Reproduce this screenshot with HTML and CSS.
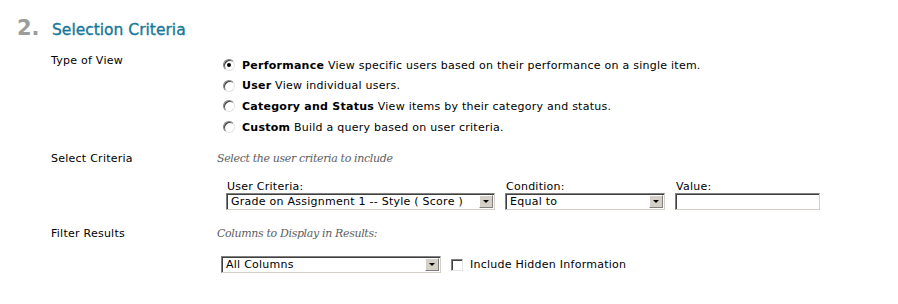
FILE: index.html
```html
<!DOCTYPE html>
<html>
<head>
<meta charset="utf-8">
<link rel="stylesheet" href="styles.css">
</head>
<body>
<div class="page">
  <h2 class="step"><span class="num">2.</span><span class="title">Selection Criteria</span></h2>

  <div class="row row-view">
    <div class="label">Type of View</div>
    <div class="field">
      <ul class="options">
        <li><span class="radio checked"></span><b>Performance</b> View specific users based on their performance on a single item.</li>
        <li><span class="radio"></span><b>User</b> View individual users.</li>
        <li><span class="radio"></span><b>Category and Status</b> View items by their category and status.</li>
        <li><span class="radio"></span><b>Custom</b> Build a query based on user criteria.</li>
      </ul>
    </div>
  </div>

  <div class="row row-criteria">
    <div class="label">Select Criteria</div>
    <div class="field">
      <div class="hint">Select the user criteria to include</div>
      <div class="criteria">
        <div class="col col-user">
          <div class="sublabel">User Criteria:</div>
          <div class="select w-user"><span class="val">Grade on Assignment 1 -- Style ( Score )</span><span class="btn"><span class="tri"></span></span></div>
        </div>
        <div class="col col-cond">
          <div class="sublabel">Condition:</div>
          <div class="select w-cond"><span class="val">Equal to</span><span class="btn"><span class="tri"></span></span></div>
        </div>
        <div class="col col-value">
          <div class="sublabel">Value:</div>
          <div class="input w-value"></div>
        </div>
      </div>
    </div>
  </div>

  <div class="row row-filter">
    <div class="label">Filter Results</div>
    <div class="field">
      <div class="hint">Columns to Display in Results:</div>
      <div class="filter">
        <div class="select w-cols"><span class="val">All Columns</span><span class="btn"><span class="tri"></span></span></div>
        <span class="check"></span><span class="check-label">Include Hidden Information</span>
      </div>
    </div>
  </div>
</div>
</body>
</html>
```
FILE: styles.css
```css
html, body {
  margin: 0;
  padding: 0;
  background: #fff;
}
body {
  font-family: "DejaVu Sans", Verdana, sans-serif;
  font-size: 11px;
  letter-spacing: 0.25px;
  color: #000;
}
.page {
  padding: 16px 0 0 0;
}
.step {
  margin: 0;
  display: flex;
  align-items: baseline;
  padding-left: 17px;
  height: 28px;
  letter-spacing: 0;
}
.num {
  font-size: 21px;
  font-weight: bold;
  color: #9c9c9c;
  width: 35px;
}
.title {
  font-size: 15.5px;
  font-weight: normal;
  color: #16789b;
  -webkit-text-stroke: 0.35px #16789b;
}
.row {
  display: grid;
  grid-template-columns: 166px 1fr;
  padding-left: 51px;
}
.label {
  line-height: 14px;
}
.row-view {
  margin-top: 10px;
}
.options {
  list-style: none;
  margin: 0;
  padding: 1px 0 0 6px;
}
.options li {
  display: flex;
  align-items: center;
  height: 20.6px;
  white-space: pre;
}
.options b {
  font-weight: bold;
}
.radio {
  width: 12px;
  height: 12px;
  border-radius: 50%;
  box-sizing: border-box;
  border: 1px solid #808080;
  border-right-color: #e4e4e4;
  border-bottom-color: #e4e4e4;
  box-shadow: inset 1px 1px 0 #404040;
  background: #fff;
  margin-right: 7px;
  display: inline-flex;
  align-items: center;
  justify-content: center;
  flex: none;
}
.radio.checked::after {
  content: "";
  width: 4px;
  height: 4px;
  border-radius: 50%;
  background: #000;
}
.row-criteria {
  margin-top: 15px;
}
.hint {
  font-family: "DejaVu Serif", Georgia, serif;
  font-style: italic;
  font-size: 11px;
  letter-spacing: -0.35px;
  color: #606060;
  line-height: 14px;
}
.criteria {
  display: flex;
  margin-top: 14px;
  padding-left: 9px;
}
.sublabel {
  line-height: 13px;
  padding-left: 1px;
}
.col-cond { margin-left: 10px; }
.col-value { margin-left: 10px; }
.select, .input {
  box-sizing: border-box;
  height: 17px;
  border: 1px solid #d4d0c8;
  border-top-color: #808080;
  border-left-color: #808080;
  box-shadow: inset 1px 1px 0 #404040;
  background: #fff;
  display: flex;
  align-items: center;
}
.select .val {
  flex: 1;
  padding-left: 4px;
  white-space: pre;
  overflow: hidden;
  line-height: 14px;
}
.btn {
  width: 14px;
  height: 13px;
  margin-right: 1px;
  background: #d4d0c8;
  border: 1px solid;
  border-color: #fff #808080 #808080 #fff;
  box-sizing: border-box;
  display: flex;
  align-items: center;
  justify-content: center;
}
.tri {
  width: 0;
  height: 0;
  border-left: 3px solid transparent;
  border-right: 3px solid transparent;
  border-top: 3px solid #000;
}
.w-user { width: 269px; }
.w-cond { width: 160px; }
.w-value { width: 145px; }
.row-filter {
  margin-top: 17px;
}
.filter {
  display: flex;
  align-items: center;
  margin-top: 15px;
  padding-left: 4px;
}
.w-cols { width: 220px; }
.check {
  width: 12px;
  height: 12px;
  box-sizing: border-box;
  border: 1px solid #808080;
  border-right-color: #e4e4e4;
  border-bottom-color: #e4e4e4;
  box-shadow: inset 1px 1px 0 #404040;
  margin-left: 10px;
  margin-right: 7px;
  background: #fff;
  flex: none;
}
```
